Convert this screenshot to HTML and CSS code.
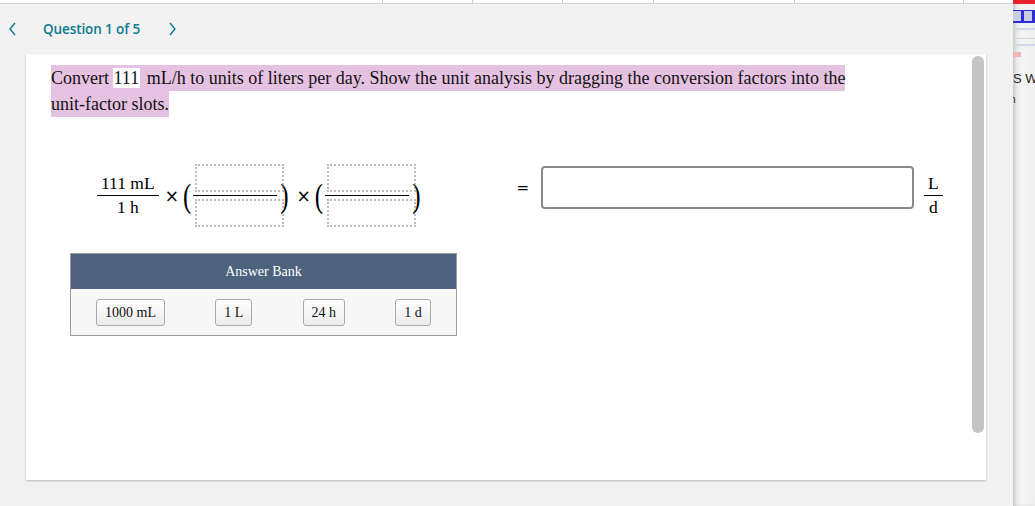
FILE: index.html
```html
<!DOCTYPE html>
<html>
<head>
  <title>Question 1 of 5</title>
  <link rel="stylesheet" href="styles.css">
</head>
<body>
  <div class="page">
    <div class="main">
      <div class="tabStrip">
        <div class="tab" style="width: 382px"></div>
        <div class="tab" style="width: 89px"></div>
        <div class="tab" style="width: 89px"></div>
        <div class="tab" style="width: 90px"></div>
        <div class="tab" style="width: 140px"></div>
        <div class="tab" style="width: 168px"></div>
      </div>

      <div class="nav">
        <svg class="chevron" width="10" height="14" viewBox="0 0 10 14"><path d="M7 1 L2 7 L7 13" /></svg>
        <span class="navTitle">Question 1 of 5</span>
        <svg class="chevron" width="10" height="14" viewBox="0 0 10 14"><path d="M3 1 L8 7 L3 13" /></svg>
      </div>

      <div class="card">
        <div class="scrollThumb"></div>
        <p class="prompt">
          <span class="mark">Convert <span class="num">111</span> mL/h to units of liters per day. Show the unit analysis by dragging the conversion factors into the </span><br>
          <span class="mark">unit-factor slots.</span>
        </p>

        <div class="equation">
          <div class="eqLeft">
            <div class="frac">
              <div class="top">111 mL</div>
              <div class="bottom">1 h</div>
            </div>
            <span class="times">×</span>
            <span class="paren">(</span>
            <div class="slotFrac">
              <div class="slot"></div>
              <div class="slotLine"></div>
              <div class="slot"></div>
            </div>
            <span class="paren close">)</span>
            <span class="times">×</span>
            <span class="paren">(</span>
            <div class="slotFrac">
              <div class="slot"></div>
              <div class="slotLine"></div>
              <div class="slot"></div>
            </div>
            <span class="paren close">)</span>
          </div>
          <div class="eqRight">
            <span class="equals">=</span>
            <div class="answerInput"></div>
            <div class="frac unitFrac">
              <div class="top">L</div>
              <div class="bottom">d</div>
            </div>
          </div>
        </div>

        <div class="answerBank">
          <div class="bankHeader">Answer Bank</div>
          <div class="bankBody">
            <button class="factor">1000 mL</button>
            <button class="factor">1 L</button>
            <button class="factor">24 h</button>
            <button class="factor">1 d</button>
          </div>
        </div>
      </div>
    </div>

    <div class="side">
      <div class="sideRed"></div>
      <div class="sideBlue">
        <span class="sideIcon"></span>
        <span class="sideIcon"></span>
      </div>
      <div class="sideLine"></div>
      <div class="sideLine thin"></div>
      <div class="sideLine"></div>
      <div class="sidePink"></div>
      <div class="sideText">S Wo</div>
      <div class="sideText small">n</div>
    </div>
  </div>
</body>
</html>
```

FILE: styles.css
```css
body {
  margin: 0;
  background-color: #f2f2f2;
  font-family: "Liberation Serif", "Times New Roman", serif;
  overflow: hidden;
}

.page {
  display: flex;
  height: 506px;
}

.main {
  flex: 1;
  display: flex;
  flex-direction: column;
}

.tabStrip {
  display: flex;
  height: 3px;
  background-color: #ffffff;
  border-bottom: 1px solid #d4d4d4;
}

.tab {
  border-right: 1px solid #cfcfcf;
}

.nav {
  display: flex;
  align-items: center;
  height: 50px;
  padding-left: 8px;
  color: #0b7a90;
}

.chevron {
  fill: none;
  stroke: #0b7a90;
  stroke-width: 1.4;
}

.navTitle {
  font-family: "Open Sans", "Noto Sans", sans-serif;
  font-weight: 600;
  font-size: 13.5px;
  letter-spacing: -0.1px;
  margin: 0 27px 0 25px;
}

.card {
  position: relative;
  margin-left: 26px;
  width: 960px;
  height: 426px;
  background-color: #ffffff;
  box-shadow: 0 1px 2px rgba(0, 0, 0, 0.25);
}

.scrollThumb {
  position: absolute;
  top: 2px;
  right: 2px;
  width: 12px;
  height: 377px;
  border-radius: 6px;
  background-color: #c4c4c4;
}

.prompt {
  margin: 0;
  padding: 11px 0 0 25px;
  font-size: 18px;
  line-height: 26px;
  color: #111111;
}

.mark {
  background-color: #e6c2e2;
  padding: 3px 0 3px 0;
}

.num {
  background-color: #ffffff;
  padding: 0 1px;
  margin: 0 2px 0 -1px;
}

.equation {
  display: flex;
  align-items: center;
  margin: 47px 0 0 73px;
  font-size: 17.5px;
}

.eqLeft {
  display: flex;
  align-items: center;
}

.frac {
  display: flex;
  flex-direction: column;
  align-items: center;
}

.frac .top {
  padding: 0 2px 1px 2px;
  border-bottom: 1px solid #000000;
  width: 100%;
  text-align: center;
}

.frac .bottom {
  padding-top: 1px;
}

.times {
  font-family: "DejaVu Sans", sans-serif;
  font-size: 17px;
  margin: 0 4px 0 8px;
}

.paren {
  font-size: 25px;
  display: inline-block;
  transform: scaleY(1.35);
  margin: 0 2px 0 0;
}

.paren.close {
  margin: 0 0 0 -4px;
}

.slotFrac {
  display: flex;
  flex-direction: column;
  gap: 3px;
}

.slot {
  width: 85px;
  height: 24px;
  border: 2px dotted #bdbdbd;
  margin-left: 2px;
}

.slotLine {
  width: 84px;
  border-top: 1px solid #000000;
}

.eqRight {
  display: flex;
  align-items: center;
  margin-left: 96px;
}

.equals {
  font-family: "DejaVu Sans", sans-serif;
  font-size: 15px;
  margin: 0 12px 16px 0;
}

.answerInput {
  width: 369px;
  height: 39px;
  border: 2px solid #8a8a8a;
  border-radius: 4px;
  margin-bottom: 16px;
}

.unitFrac {
  margin-left: 12px;
}

.answerBank {
  margin: 26px 0 0 44px;
  width: 385px;
  border: 1px solid #9c9c9c;
}

.bankHeader {
  background-color: #4d627c;
  color: #ffffff;
  font-size: 14px;
  text-align: center;
  height: 35px;
  line-height: 35px;
}

.bankBody {
  display: flex;
  justify-content: space-around;
  align-items: flex-start;
  height: 46px;
  padding-top: 10px;
  box-sizing: border-box;
  background-color: #f7f7f7;
}

.factor {
  font-family: "Liberation Serif", "Times New Roman", serif;
  font-size: 14px;
  color: #111111;
  height: 27px;
  padding: 0 8px;
  border: 1px solid #ababab;
  border-radius: 3px;
  background: linear-gradient(#ffffff, #ececec);
}

.side {
  width: 22px;
  background: linear-gradient(to right, #e4e4e4, #f4f4f4 40%, #f0f0f0);
  box-shadow: inset 2px 0 3px rgba(0, 0, 0, 0.12);
  overflow: hidden;
  font-family: "Liberation Sans", Arial, sans-serif;
}

.sideRed {
  height: 4px;
  background-color: #e8202a;
}

.sideBlue {
  display: flex;
  gap: 3px;
  height: 12px;
  margin-top: 6px;
  padding: 1px 0 0 0;
  background-color: #2b2bd8;
}

.sideIcon {
  width: 8px;
  height: 10px;
  background-color: #c8cde0;
}

.sideLine {
  height: 2px;
  margin-top: 5px;
  background-color: #d3d8e8;
}

.sideLine.thin {
  height: 1px;
  margin-top: 8px;
  background-color: #d8d8d8;
}

.sidePink {
  height: 5px;
  width: 8px;
  margin-top: 6px;
  background-color: #f2b6b6;
}

.sideText {
  font-size: 13px;
  margin: 15px 0 0 0;
  color: #222222;
  white-space: nowrap;
  line-height: 14px;
}

.sideText.small {
  font-size: 10px;
  margin-top: 7px;
  margin-left: -3px;
}
```
